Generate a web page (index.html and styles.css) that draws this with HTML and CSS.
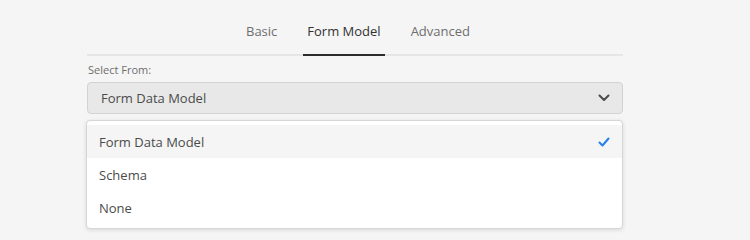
FILE: index.html
```html
<!DOCTYPE html>
<html>
<head>
<meta charset="utf-8">
<link rel="stylesheet" href="styles.css">
</head>
<body>
<div class="panel">
  <nav class="tabs">
    <span class="tab">Basic</span>
    <span class="tab active">Form Model</span>
    <span class="tab">Advanced</span>
  </nav>
  <div class="field">
    <div class="label">Select From:</div>
    <div class="picker">
      <span>Form Data Model</span>
      <svg class="chev" width="12" height="8" viewBox="0 0 12 8"><path d="M1.5 1.5 L6 6 L10.5 1.5" fill="none" stroke="#4b4b4b" stroke-width="2" stroke-linecap="round" stroke-linejoin="round"/></svg>
    </div>
    <div class="menu">
      <div class="item selected"><span>Form Data Model</span>
        <svg width="12" height="10" viewBox="0 0 12 10"><path d="M1.5 5.5 L4.5 8.5 L10.5 1.5" fill="none" stroke="#2680eb" stroke-width="2" stroke-linecap="round" stroke-linejoin="round"/></svg>
      </div>
      <div class="item"><span>Schema</span></div>
      <div class="item"><span>None</span></div>
    </div>
  </div>
</div>
</body>
</html>
```
FILE: styles.css
```css
html, body { margin: 0; padding: 0; }
body {
  background: #f5f5f5;
  font-family: "Open Sans", "Liberation Sans", sans-serif;
  width: 750px;
  height: 240px;
  overflow: hidden;
}
.panel {
  width: 536px;
  margin-left: 87px;
  padding-top: 17px;
}
.tabs {
  display: flex;
  justify-content: center;
  gap: 22px;
  border-bottom: 2px solid #e6e6e6;
  height: 39px;
  box-sizing: border-box;
  padding-left: 6px;
}
.tab {
  font-size: 13px;
  color: #6e6e6e;
  line-height: 28px;
  padding: 0 4px;
  height: 39px;
  box-sizing: border-box;
}
.tab.active {
  color: #323232;
  border-bottom: 2px solid #2c2c2c;
  margin-bottom: -2px;
}
.field { padding-top: 5px; }
.label {
  font-size: 11px;
  color: #6e6e6e;
  line-height: 18px;
  padding-left: 1px;
}
.picker {
  margin-top: 3px;
  height: 32px;
  box-sizing: border-box;
  background: #e8e8e8;
  border: 1px solid #d3d3d3;
  border-radius: 4px;
  display: flex;
  align-items: center;
  justify-content: space-between;
  padding: 0 12px 0 13px;
  font-size: 13px;
  color: #4b4b4b;
}
.menu {
  margin-top: 6px;
  margin-left: -1px;
  background: #fff;
  border: 1px solid #d6d6d6;
  border-radius: 4px;
  box-shadow: 0 1px 4px rgba(0,0,0,0.12);
  padding: 4px 0;
}
.item {
  height: 33px;
  display: flex;
  align-items: center;
  justify-content: space-between;
  padding: 0 12px 0 12px;
  font-size: 13px;
  color: #4b4b4b;
}
.item.selected { background: #f5f5f5; }
```
